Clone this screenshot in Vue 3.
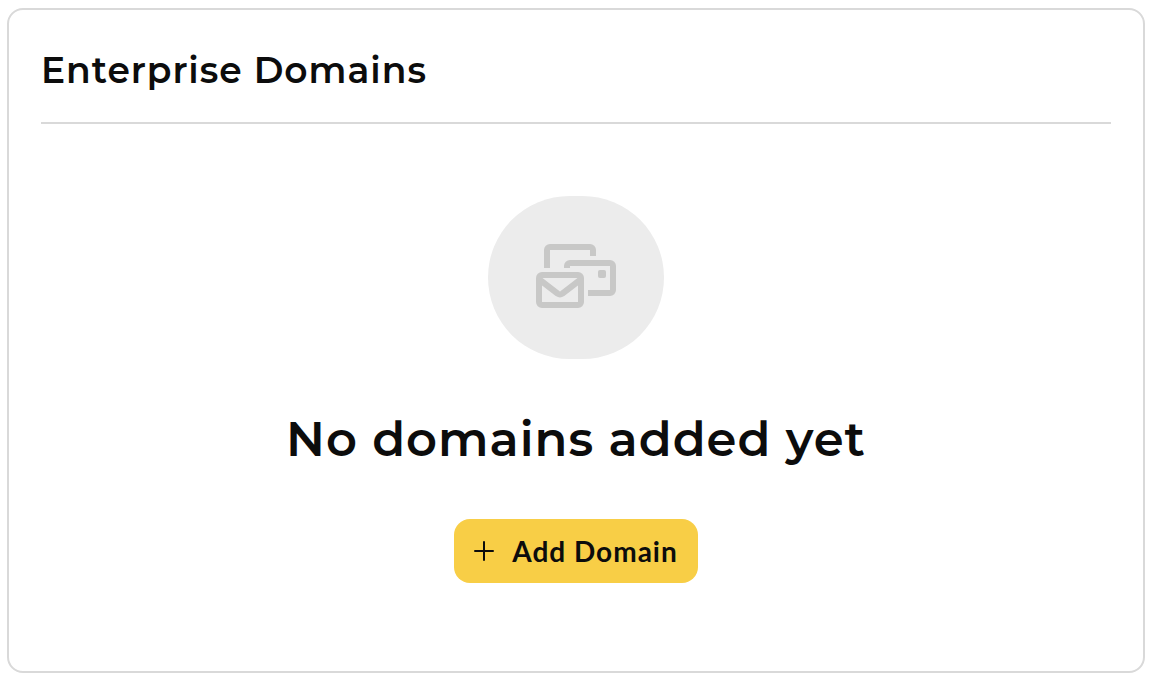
<script setup>
import { ref } from 'vue';

const title = ref('Enterprise Domains');
const emptyText = ref('No domains added yet');
const domains = ref([]);

function addDomain() {
  domains.value.push({ name: '' });
}
</script>

<template>
  <section class="card">
    <header class="card-header">
      <h2 class="card-title">{{ title }}</h2>
    </header>

    <div class="empty">
      <div class="empty-icon">
        <!-- stacked envelopes -->
        <svg viewBox="0 0 80 64" width="80" height="64" fill="none" aria-hidden="true">
          <g stroke="#c8c8c7" stroke-width="6">
            <path d="M11 24V6a3 3 0 0 1 3-3h40a3 3 0 0 1 3 3v6" />
            <path d="M31 24v-2a3 3 0 0 1 3-3h40a3 3 0 0 1 3 3v24a3 3 0 0 1-3 3H52" />
            <rect x="3" y="31" width="42" height="30" rx="3" />
            <path d="M4 36l17.500 13.500q2.500 1.700 5 0L44 36" />
          </g>
          <rect x="62" y="26" width="8" height="8" rx="2" fill="#c8c8c7" />
        </svg>
      </div>

      <h1 class="empty-text">{{ emptyText }}</h1>

      <button class="add-button" type="button" @click="addDomain">
        <svg viewBox="0 0 20 20" width="20" height="20" fill="none" aria-hidden="true">
          <path d="M10 1v18M1 10h18" stroke="#0c0c0c" stroke-width="2" stroke-linecap="round" />
        </svg>
        <span>Add Domain</span>
      </button>
    </div>
  </section>
</template>

<style>
body {
  background: #fff;
}
</style>

<style scoped>
.card {
  margin: 8px 7px 0;
  padding: 32px 32px 88px;
  border: 2px solid #d9d9d9;
  border-radius: 16px;
  color: #0c0c0c;
  letter-spacing: 1px;
}
.card-header {
  padding-bottom: 24px;
  border-bottom: 2px solid #d9d9d9;
}
.card-title {
  margin: 0;
  font-family: Montserrat, Inter, sans-serif;
  font-size: 36px;
  font-weight: 600;
  line-height: 56px;
}
.empty {
  display: flex;
  flex-direction: column;
  align-items: center;
  padding-top: 72px;
}
.empty-icon {
  display: flex;
  padding: 48px 48px 51px;
  border-radius: 100px;
  background: #ececec;
}
.empty-text {
  margin: 48px 0;
  font-family: Montserrat, Inter, sans-serif;
  font-size: 48px;
  font-weight: 600;
  line-height: 64px;
  text-align: center;
}
.add-button {
  display: flex;
  align-items: center;
  gap: 18px;
  padding: 12px 20px;
  border: none;
  border-radius: 16px;
  background: #f8ce46;
  color: #0c0c0c;
  font-family: Lato, sans-serif;
  font-size: 28px;
  font-weight: 700;
  line-height: 40px;
  letter-spacing: inherit;
  cursor: pointer;
}
</style>
